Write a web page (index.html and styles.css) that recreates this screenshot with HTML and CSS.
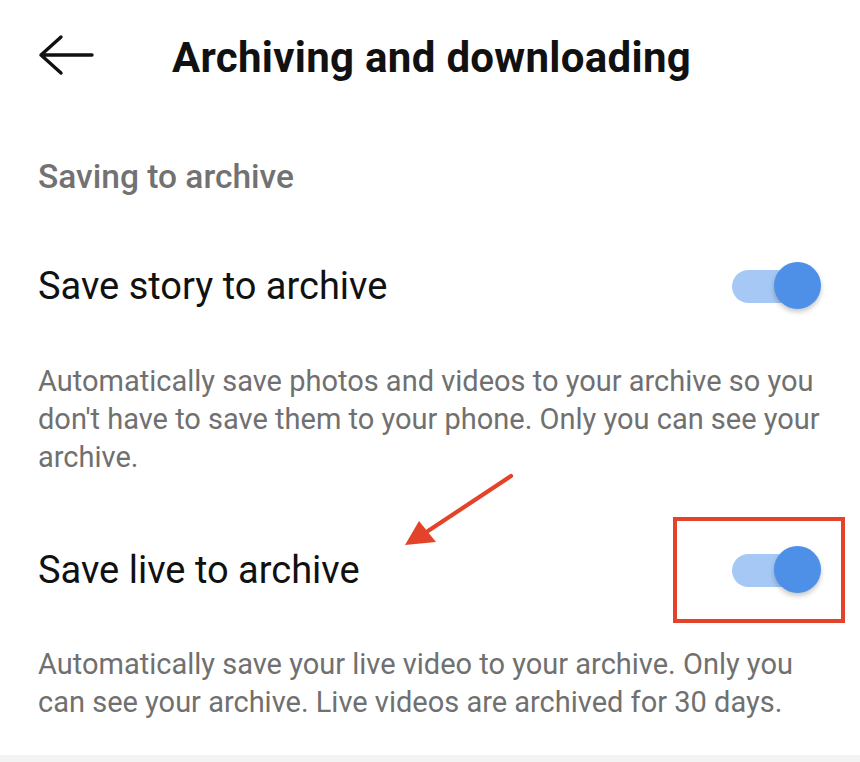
FILE: index.html
```html
<!DOCTYPE html>
<html>
<head>
<meta charset="utf-8">
<link rel="stylesheet" href="styles.css">
</head>
<body>
<div class="page">
  <header class="topbar">
    <svg class="back" width="60" height="48" viewBox="0 0 60 48">
      <path d="M56 21 H5 M25 3 L5 21 L25 39" fill="none" stroke="#111" stroke-width="3.4" stroke-linecap="round" stroke-linejoin="round"/>
    </svg>
    <h1 class="title">Archiving and downloading</h1>
  </header>
  <div class="section">Saving to archive</div>
  <div class="row row1">
    <div class="label">Save story to archive</div>
    <div class="toggle"><span class="track"></span><span class="thumb"></span></div>
  </div>
  <p class="desc">Automatically save photos and videos to your archive so you don't have to save them to your phone. Only you can see your archive.</p>
  <div class="row row2">
    <div class="label">Save live to archive</div>
    <div class="hl">
      <div class="toggle"><span class="track"></span><span class="thumb"></span></div>
    </div>
  </div>
  <p class="desc desc2">Automatically save your live video to your archive. Only you can see your archive. Live videos are archived for 30 days.</p>
  <svg class="arrow" width="120" height="90" viewBox="0 0 120 90">
    <path d="M111 6 L28 61" stroke="#e4432b" stroke-width="4.2" stroke-linecap="round"/>
    <polygon points="5,75 19,51 36,72" fill="#e4432b"/>
  </svg>
  <div class="bottom"></div>
</div>
</body>
</html>
```
FILE: styles.css
```css
* { box-sizing: border-box; }
html, body { margin: 0; padding: 0; background: #fff; }
body { font-family: Roboto, "Noto Sans", sans-serif; color: #111; }
.page { width: 860px; height: 762px; position: relative; overflow: hidden; }
.topbar { display: flex; align-items: center; height: 116px; padding-left: 36px; }
.back { display: block; }
.title { margin: 0 0 0 76px; font-size: 42px; font-weight: 700; letter-spacing: 0.3px; color: #111; line-height: 50px; }
.section { padding-left: 38px; font-size: 33.5px; font-weight: 500; color: #727272; margin-top: 43px; line-height: 36px; }
.row { display: flex; align-items: center; justify-content: space-between; padding-left: 38px; }
.row1 { margin-top: 67px; height: 48px; padding-right: 39px; }
.label { font-size: 38px; font-weight: 400; color: #111; line-height: 44px; }
.toggle { position: relative; width: 89px; height: 48px; flex: none; }
.track { position: absolute; left: 0; top: 8px; width: 80px; height: 33px; border-radius: 17px; background: #a5c8f4; }
.thumb { position: absolute; left: 42px; top: 0; width: 47px; height: 47px; border-radius: 50%; background: #4e8fe8; box-shadow: 0 3px 5px rgba(0,0,0,0.22); }
.desc { margin: 52px 0 0 0; padding: 0 22px 0 38px; font-size: 29px; line-height: 38px; color: #707070; }
.row2 { margin-top: 41px; height: 106px; padding-right: 15px; }
.hl { width: 172px; height: 106px; border: 4px solid #e4432b; display: flex; align-items: center; padding-left: 55px; flex: none; }
.desc2 { margin-top: 22px; }
.arrow { position: absolute; left: 400px; top: 470px; }
.bottom { position: absolute; left: 0; right: 0; bottom: 0; height: 7px; background: #f3f3f3; }
```
